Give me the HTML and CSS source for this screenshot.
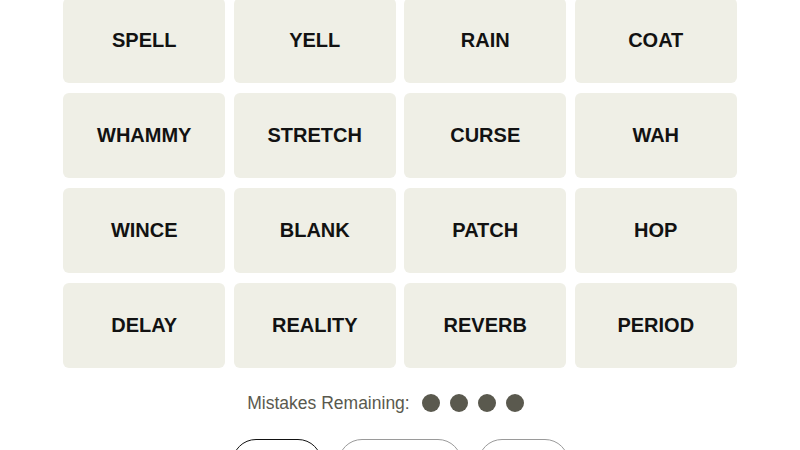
FILE: index.html
```html
<!DOCTYPE html>
<html lang="en">
<head>
    <meta charset="UTF-8">
    <title>Connections</title>
    <meta name="viewport" content="width=device-width, initial-scale=1.0">
    <link rel="stylesheet" href="styles.css">
</head>
<body>
    <main class="game">
        <div class="board">
            <button class="tile">Spell</button>
            <button class="tile">Yell</button>
            <button class="tile">Rain</button>
            <button class="tile">Coat</button>
            <button class="tile">Whammy</button>
            <button class="tile">Stretch</button>
            <button class="tile">Curse</button>
            <button class="tile">Wah</button>
            <button class="tile">Wince</button>
            <button class="tile">Blank</button>
            <button class="tile">Patch</button>
            <button class="tile">Hop</button>
            <button class="tile">Delay</button>
            <button class="tile">Reality</button>
            <button class="tile">Reverb</button>
            <button class="tile">Period</button>
        </div>

        <div class="mistakes">
            <span>Mistakes Remaining:</span>
            <span class="dots">
                <span class="dot"></span>
                <span class="dot"></span>
                <span class="dot"></span>
                <span class="dot"></span>
            </span>
        </div>

        <div class="actions">
            <button class="action action-dark">Shuffle</button>
            <button class="action">Deselect All</button>
            <button class="action">Submit</button>
        </div>
    </main>
</body>
</html>
```

FILE: styles.css
```css
body {
    margin: 0;
    font-family: "Liberation Sans", Arial, sans-serif;
    background-color: #ffffff;
    color: #121212;
    overflow: hidden;
}
.game {
    display: flex;
    flex-direction: column;
    align-items: center;
    margin-top: -2px;
}
.board {
    display: grid;
    grid-template-columns: repeat(4, 162px);
    grid-auto-rows: 85px;
    column-gap: 8.5px;
    row-gap: 10px;
}
.tile {
    border: none;
    border-radius: 6px;
    background-color: #efefe6;
    color: #121212;
    font-family: "Liberation Sans", Arial, sans-serif;
    font-weight: bold;
    font-size: 20px;
    text-transform: uppercase;
    cursor: pointer;
    padding: 0;
}
.mistakes {
    display: flex;
    align-items: center;
    gap: 12px;
    margin-top: 25px;
    padding-right: 29px;
    font-size: 17.5px;
    color: #5a594e;
    height: 20px;
}
.dots {
    display: flex;
    gap: 10px;
}
.dot {
    width: 18px;
    height: 18px;
    border-radius: 50%;
    background-color: #5a594e;
}
.actions {
    display: flex;
    gap: 16px;
    margin-top: 26px;
}
.action {
    height: 48px;
    padding: 0 15px;
    border: 1px solid #9a9a9a;
    border-radius: 24px;
    background-color: #ffffff;
    color: #121212;
    font-family: "Liberation Sans", Arial, sans-serif;
    font-size: 16px;
    font-weight: 600;
}
.action:nth-child(1) {
    width: 90px;
}
.action:nth-child(2) {
    width: 124px;
}
.action:nth-child(3) {
    width: 91px;
}
.action-dark {
    border-color: #121212;
}
```
